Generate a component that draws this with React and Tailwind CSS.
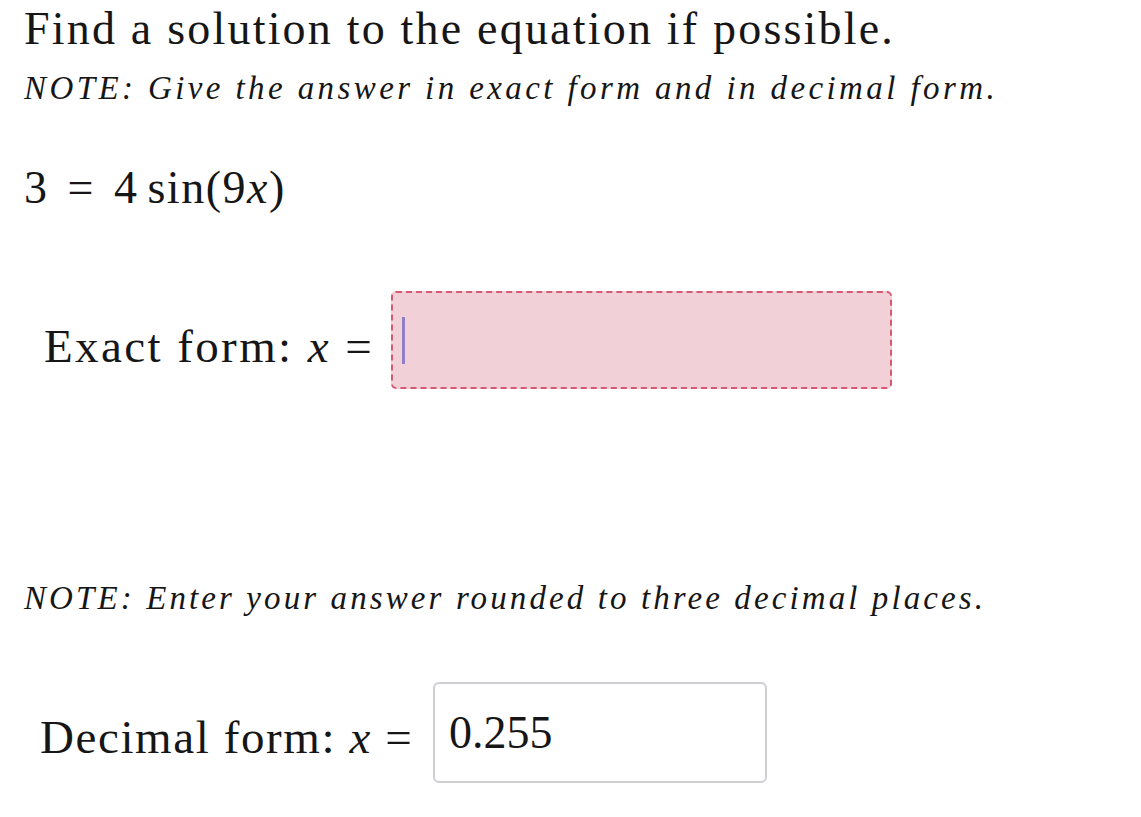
import React from "react";

const serif = "font-['Liberation_Serif','DejaVu_Serif',serif]";

function MathX() {
  return <span className="italic">x</span>;
}

export default function App() {
  return (
    <div className={`min-h-screen bg-white text-[#161616] ${serif} pl-6 pt-[6px]`}>
      {/* question */}
      <p className="text-[46px] leading-[46px] tracking-[2.2px] whitespace-nowrap">
        Find a solution to the equation if possible.
      </p>
      <p className="mt-[20px] text-[33px] leading-[33px] italic tracking-[3.4px] whitespace-nowrap">
        NOTE: Give the answer in exact form and in decimal form.
      </p>

      {/* equation */}
      <p className="mt-[60px] text-[46px] leading-[46px] tracking-[1.5px]">
        3<span className="mx-[19px]">=</span>4<span className="ml-[9px]">sin</span>(9<MathX />)
      </p>

      {/* exact answer */}
      <div className="mt-[80px] flex items-start pl-5">
        <span className="mt-[6px] w-[335px] text-[47px] leading-[98px] tracking-[2.4px] whitespace-nowrap">
          Exact form: <MathX /> =
        </span>
        <div className="ml-[12px] flex h-[98px] w-[501px] items-center rounded-[5px] border-2 border-dashed border-[#d65a72] bg-[#f2d0d8] pl-[9px]">
          <div className="h-[47px] w-[3px] bg-[#8f80c8]" />
        </div>
      </div>

      <p className="mt-[187px] text-[33px] leading-[33px] italic tracking-[3.1px] whitespace-nowrap">
        NOTE: Enter your answer rounded to three decimal places.
      </p>

      {/* decimal answer */}
      <div className="mt-[67px] flex items-start pl-4">
        <span className="mt-[6px] w-[381px] text-[47px] leading-[98px] tracking-[1.6px] whitespace-nowrap">
          Decimal form: <MathX /> =
        </span>
        <div className="ml-[12px] flex h-[101px] w-[334px] items-center rounded-[6px] border-2 border-[#cfcfd3] pl-[14px] text-[46px]">
          0.255
        </div>
      </div>
    </div>
  );
}
